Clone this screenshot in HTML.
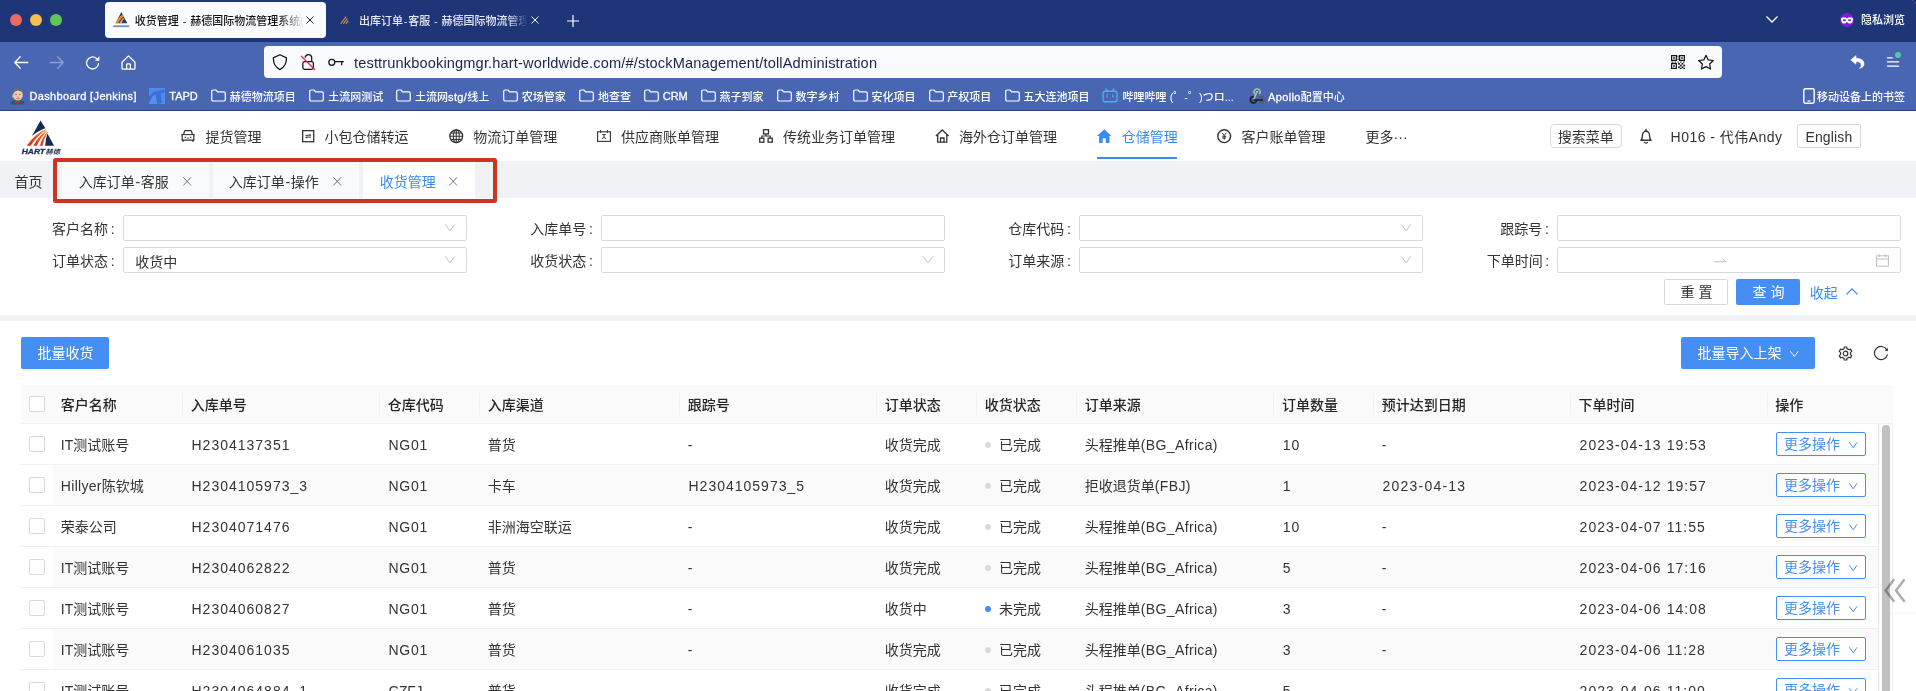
<!DOCTYPE html>
<html lang="zh-CN">
<head>
<meta charset="utf-8">
<title>收货管理 - 赫德国际物流管理系统</title>
<style>
*{box-sizing:border-box;margin:0;padding:0}
html,body{width:1916px;height:691px;overflow:hidden;background:#fff}
body{will-change:transform}
body{font-family:"Liberation Sans","Noto Sans CJK SC",sans-serif;font-size:14px;color:#333;position:relative}
.abs{position:absolute}
.t{position:absolute;white-space:nowrap;line-height:20px;height:20px}
svg{position:absolute;overflow:visible}
/* browser chrome */
#tabbar{left:0;top:0;width:1916px;height:42px;background:#1e3578}
#toolbar{left:0;top:42px;width:1916px;height:68px;background:#4966b2}
#chromeline{left:0;top:110px;width:1916px;height:1px;background:#2b3f86}
.bm{color:#fff;font-size:11px;font-weight:500;top:87px}
.lb{-webkit-text-stroke:.3px #fff;letter-spacing:.38px}
/* app */
.nav{font-size:14px;color:#333;top:127px}
.tag{top:162px;height:37px;background:#f9fafb}
.lbl{font-size:14px;color:#333;word-spacing:-1.3px}
.inp{position:absolute;height:26px;border:1px solid #d9d9d9;border-radius:2px;background:#fff}
.th{font-size:14px;font-weight:500;color:#262626;top:395px;margin-left:-.7px}
.sep{position:absolute;top:393px;width:1px;height:22px;background:#f0f0f0}
.row{position:absolute;left:21px;width:1857px;height:41px;border-bottom:1px solid #f0f0f0}
.row.g{background:linear-gradient(90deg,#fff 0,#fff 32px,#fafafa 32px)}
.c{position:absolute;white-space:nowrap;line-height:20px;top:11px;margin-left:-.7px;font-size:14px;color:#333}
.n{letter-spacing:1px;margin-left:0}
.la{letter-spacing:.36px}
.cb{position:absolute;left:8px;top:12px;width:16px;height:16px;border:1px solid #d9d9d9;border-radius:2px;background:#fff}
.dot{position:absolute;left:964px;top:18px;width:6px;height:6px;border-radius:50%;background:#d9d9d9}
.more{position:absolute;left:1755px;top:8px;width:90px;height:24px;border:1px solid #458ef4;border-radius:2px;background:#fff;color:#458ef4;font-size:14px;line-height:23px;padding-left:7px;box-shadow:0 2px 0 rgba(0,0,0,.02)}
</style>
</head>
<body>
<!-- ============ BROWSER CHROME ============ -->
<div class="abs" id="tabbar"></div>
<div class="abs" id="toolbar"></div>
<div class="abs" id="chromeline"></div>
<div class="abs" style="left:1912px;top:0;width:4px;height:4px;background:radial-gradient(circle at 0 100%,rgba(0,0,0,0) 3.300px,#4c5f9c 3.800px,#1a0f20 4.500px)"></div>
<!-- traffic lights -->
<div class="abs" style="left:10px;top:14px;width:12px;height:12px;border-radius:50%;background:#ec6a5e"></div>
<div class="abs" style="left:30px;top:14px;width:12px;height:12px;border-radius:50%;background:#f4bf4f"></div>
<div class="abs" style="left:50px;top:14px;width:12px;height:12px;border-radius:50%;background:#61c554"></div>
<!-- active tab -->
<div class="abs" style="left:105px;top:2px;width:221px;height:36px;border-radius:4px;background:#fafbfe"></div>
<svg style="left:113px;top:11px" width="17" height="17" viewBox="0 0 17 17"><path d="M8.300 1 L14.300 12.300 H2.600 Z" fill="#1f3a7a"/><path d="M2.400 12.300 L5.500 12.300 C6.500 9 8.500 6.800 10.800 5.700 L9.600 3.500 C6.500 5.500 3.800 8.500 2.400 12.300 Z" fill="#ee8a2e"/><path d="M6.600 12.300 L8.600 12.300 C9 10.300 10.200 8.500 11.900 7.600 L11.300 6.500 C8.900 7.800 7.300 9.800 6.600 12.300 Z" fill="#f3a64a"/><rect x="0.300" y="14.400" width="16" height="1.700" fill="#2b4a8f" opacity=".65"/></svg>
<div class="t" style="left:134.800px;top:11px;font-size:11px;color:#15141a;width:170px;overflow:hidden;word-spacing:.8px;font-weight:500">收货管理 - 赫德国际物流管理系统(</div>
<div class="abs" style="left:279px;top:8px;width:26px;height:24px;background:linear-gradient(90deg,rgba(250,251,254,0),#fafbfe)"></div>
<svg style="left:306px;top:16px" width="8" height="8" viewBox="0 0 8 8"><path d="M0.5 0.5 L7.5 7.5 M7.5 0.5 L0.5 7.5" stroke="#15141a" stroke-width="0.95" fill="none"/></svg>
<!-- inactive tab -->
<svg style="left:339px;top:15.300px" width="10.500" height="10.500" viewBox="0 0 12 12"><path d="M7 -1 L12.500 10 H1.500 Z" fill="#2a3f80"/><path d="M2 10 L8 2 M5 10 L9.5 4 M8 10 L10.5 6.5" stroke="#d98a3a" stroke-width="1.3" fill="none"/></svg>
<div class="t" style="left:359px;top:11px;font-size:11px;color:#e8eaf5;width:168px;overflow:hidden;word-spacing:.8px;font-weight:500">出库订单<span style="margin:0 .75px">-</span>客服 - 赫德国际物流管理系统</div>
<div class="abs" style="left:507px;top:8px;width:20px;height:24px;background:linear-gradient(90deg,rgba(30,53,120,0),#1e3578)"></div>
<svg style="left:531px;top:16px" width="8" height="8" viewBox="0 0 8 8"><path d="M0.5 0.5 L7.5 7.5 M7.5 0.5 L0.5 7.5" stroke="#fff" stroke-width="0.95" fill="none"/></svg>
<svg style="left:567px;top:14.500px" width="12" height="12" viewBox="0 0 12 12"><path d="M6 0 V12 M0 6 H12" stroke="#fff" stroke-width="1.2" fill="none"/></svg>
<!-- right of tab bar -->
<svg style="left:1766px;top:16px" width="12" height="7" viewBox="0 0 12 7"><path d="M0.5 0.5 L6 6 L11.5 0.5" stroke="#fff" stroke-width="1.3" fill="none"/></svg>
<div class="abs" style="left:1839.500px;top:12.500px;width:14.800px;height:14.800px;border-radius:50%;background:#7a1fd8"></div>
<svg style="left:1841px;top:16.800px" width="12" height="6.600" viewBox="0 0 10 5.500"><path d="M0 1.200 C1.500 0 3.500 0 5 1.200 C6.500 0 8.500 0 10 1.200 C10 4 9 5.500 7.500 5.500 C6.300 5.500 5.600 4.600 5 4.200 C4.400 4.600 3.700 5.500 2.500 5.500 C1 5.500 0 4 0 1.200 Z" fill="#fff"/><ellipse cx="2.800" cy="2.700" rx="1.300" ry="0.850" fill="#7a1fd8"/><ellipse cx="7.200" cy="2.700" rx="1.300" ry="0.850" fill="#7a1fd8"/></svg>
<div class="t" style="left:1861px;top:10px;font-size:11px;color:#fff;font-weight:500">隐私浏览</div>
<!-- nav buttons -->
<svg style="left:14px;top:56px" width="14" height="13" viewBox="0 0 14 13"><path d="M6.2 0.8 L0.8 6.5 L6.2 12.2 M0.8 6.5 H13.8" stroke="#fff" stroke-width="1.3" fill="none" stroke-linecap="round" stroke-linejoin="round"/></svg>
<svg style="left:50px;top:56px" width="14" height="13" viewBox="0 0 14 13"><path d="M7.8 0.8 L13.2 6.5 L7.8 12.2 M13.2 6.5 H0.2" stroke="#8fa0d2" stroke-width="1.3" fill="none" stroke-linecap="round" stroke-linejoin="round"/></svg>
<svg style="left:85px;top:55px" width="16" height="16" viewBox="0 0 16 16"><path d="M13.6 8.3 A6 6 0 1 1 11.5 3.4" stroke="#fff" stroke-width="1.3" fill="none" stroke-linecap="round"/><path d="M14.4 1.2 V5.8 H9.8 Z" fill="#fff"/></svg>
<svg style="left:121px;top:55px" width="15" height="15" viewBox="0 0 15 15"><path d="M1 7.2 L7.5 0.9 L14 7.2 V13.2 A0.9 0.9 0 0 1 13.1 14.1 H1.9 A0.9 0.9 0 0 1 1 13.2 Z" stroke="#fff" stroke-width="1.3" fill="none" stroke-linejoin="round"/><path d="M5.6 14 V9.6 A0.8 0.8 0 0 1 6.4 8.8 H8.6 A0.8 0.8 0 0 1 9.4 9.6 V14" stroke="#fff" stroke-width="1.3" fill="none"/></svg>
<!-- url bar -->
<div class="abs" style="left:264px;top:46px;width:1458px;height:32px;border-radius:4px;background:#f9fafd"></div>
<svg style="left:272px;top:54px" width="16" height="17" viewBox="0 0 16 17"><path d="M7.900 0.700 L14.500 3.900 C14.500 9.500 12 13.400 7.900 15.600 C3.800 13.400 1.300 9.500 1.300 3.900 Z" stroke="#15141a" stroke-width="1.250" fill="none" stroke-linejoin="round"/></svg>
<svg style="left:301px;top:54px" width="15" height="17" viewBox="0 0 15 17"><path d="M4.100 3.600 A3.350 3.500 0 0 1 10.700 3.400 V7.600" stroke="#15141a" stroke-width="1.250" fill="none"/><rect x="1.800" y="7.700" width="10.600" height="7.600" rx="1.700" stroke="#15141a" stroke-width="1.250" fill="none"/><path d="M0.100 2 L13.900 15.700" stroke="#e22850" stroke-width="1.250"/></svg>
<svg style="left:328px;top:57.700px" width="18" height="10" viewBox="0 0 18 10"><circle cx="3.800" cy="4.300" r="3" stroke="#15141a" stroke-width="1.250" fill="none"/><path d="M6.800 3.600 H15.800 M13.700 3.600 V7.200" stroke="#15141a" stroke-width="1.250" fill="none"/></svg>
<div class="t" id="url" style="left:354px;top:53px;font-size:14.6px;color:#1c2448;letter-spacing:0.14px">testtrunkbookingmgr.hart-worldwide.com/#/stockManagement/tollAdministration</div>
<!-- qr + star -->
<svg style="left:1671px;top:55px" width="14" height="14" viewBox="0 0 14 14" fill="#15141a"><path fill-rule="evenodd" d="M0 0h6v6H0z M1.200 1.200v3.600h3.600v-3.600z M8 0h6v6H8z M9.200 1.200v3.600h3.600v-3.600z M0 8h6v6H0z M1.200 9.200v3.600h3.600v-3.600z"/><rect x="2.200" y="2.200" width="1.600" height="1.600"/><rect x="10.200" y="2.200" width="1.600" height="1.600"/><rect x="2.200" y="10.200" width="1.600" height="1.600"/><rect x="6.600" y="0.500" width="1" height="2"/><rect x="6.600" y="3.500" width="1" height="1.500"/><rect x="6.600" y="6.500" width="1.200" height="1.200"/><rect x="0.500" y="6.600" width="2" height="1"/><rect x="3.600" y="6.600" width="1.600" height="1"/><rect x="9" y="6.600" width="1.400" height="1"/><rect x="12" y="6.600" width="1.600" height="1"/><rect x="7.200" y="8" width="1.700" height="1.700"/><rect x="10.600" y="8" width="1.700" height="1.700"/><rect x="8.900" y="9.700" width="1.700" height="1.700"/><rect x="12.300" y="9.700" width="1.700" height="1.700"/><rect x="7.200" y="11.400" width="1.700" height="1.700"/><rect x="10.600" y="11.400" width="1.700" height="1.700"/><rect x="12.300" y="12.800" width="1.700" height="1.200"/><rect x="8.900" y="12.800" width="1.700" height="1.200"/></svg>
<svg style="left:1697px;top:53.500px" width="18" height="17" viewBox="0 0 18 17"><path d="M9 1.300 L11.200 5.900 L16.300 6.500 L12.600 10 L13.500 15 L9 12.600 L4.500 15 L5.400 10 L1.700 6.500 L6.800 5.900 Z" stroke="#15141a" stroke-width="1.250" fill="none" stroke-linejoin="round"/></svg>
<!-- right toolbar icons -->
<svg style="left:1850px;top:55px" width="15" height="14" viewBox="0 0 15 14"><path d="M6 0.600 L0.800 4.900 L6 9.200 V6.600 C9 6.600 11.200 7.600 11.200 10.400 C11.200 11.600 10.600 12.600 9.400 13.400 C12.600 12.800 14.200 10.800 14 8.400 C13.700 5 10.500 3.300 6 3.200 Z" fill="#fff" stroke="#fff" stroke-width="0.600" stroke-linejoin="round"/></svg>
<svg style="left:1887px;top:56.700px" width="12" height="10" viewBox="0 0 12 10"><path d="M0.400 0.800 H5.400 M0.400 4.800 H11.600 M0.400 9 H11.600" stroke="#fff" stroke-width="1.250" fill="none" stroke-linecap="round"/></svg>
<div class="abs" style="left:1895px;top:52px;width:6px;height:6px;border-radius:50%;background:#54c9a2"></div>

<!-- bookmarks -->
<svg style="left:9.500px;top:87.500px" width="15" height="17" viewBox="0 0 15 17"><path d="M0.500 16.500 C0.500 13 3 12 7.500 12 C12 12 14.500 13 14.500 16.500 Z" fill="#3b5368"/><ellipse cx="7.800" cy="6.800" rx="5" ry="5.800" fill="#e9cfb0"/><path d="M2.600 6.500 C1.800 2.500 5 0.300 8.500 0.600 C11.500 0.800 13.300 3 13 5.200 C11.500 2.800 8.500 2.300 6.300 3 C4.300 3.600 3.200 5 3.200 7.500 Z" fill="#6d6b69"/><path d="M2.600 6.500 C1.500 7 1.800 9.500 3.200 9.600 Z" fill="#d9b995"/><path d="M5.200 13 L7.500 14 L9.800 13 L9.800 15.600 L7.500 14.600 L5.200 15.600 Z" fill="#d33833"/><path d="M5.800 10 C7 11.200 9 11.200 10.200 10" stroke="#8a6a50" stroke-width="0.700" fill="none"/><circle cx="6" cy="6.600" r="0.550" fill="#333"/><circle cx="9.800" cy="6.600" r="0.550" fill="#333"/><path d="M7.300 8.800 C7.800 9.200 8.500 9.200 9 8.800" stroke="#b5432f" stroke-width="0.600" fill="none"/></svg>
<div class="t bm" style="left:29.4px;top:86px"><span class="lb">Dashboard [Jenkins]</span></div>
<svg style="left:148.600px;top:88px" width="16" height="16" viewBox="0 0 16 16"><rect width="16" height="16" fill="#4d8df0"/><path d="M0 16 L0 8 L4.500 4 L15.500 1.200 L16 4.500 L11.800 5.600 L13 15 L8 16 L6.800 7 L3.600 8 Z" fill="#3f6fd0"/><path d="M0 16 L3.600 8 L6.800 7 L8 16 Z" fill="#5b9af5" opacity=".35"/></svg>
<div class="t bm" style="left:169.3px;top:86px"><span class="lb" style="letter-spacing:0">TAPD</span></div>
<svg style="left:211px;top:89px" width="15" height="13" viewBox="0 0 15 13"><path d="M0.7 2.6 A1.6 1.6 0 0 1 2.3 1 H5 L6.6 2.8 H12.7 A1.6 1.6 0 0 1 14.3 4.4 V10.4 A1.6 1.6 0 0 1 12.7 12 H2.3 A1.6 1.6 0 0 1 0.7 10.4 Z" stroke="#fff" stroke-width="1.2" fill="none" stroke-linejoin="round"/></svg>
<div class="t bm" style="left:229.8px">赫德物流项目</div>
<svg style="left:309px;top:89px" width="15" height="13" viewBox="0 0 15 13"><path d="M0.7 2.6 A1.6 1.6 0 0 1 2.3 1 H5 L6.6 2.8 H12.7 A1.6 1.6 0 0 1 14.3 4.4 V10.4 A1.6 1.6 0 0 1 12.7 12 H2.3 A1.6 1.6 0 0 1 0.7 10.4 Z" stroke="#fff" stroke-width="1.2" fill="none" stroke-linejoin="round"/></svg>
<div class="t bm" style="left:328.3px">土流网测试</div>
<svg style="left:396px;top:89px" width="15" height="13" viewBox="0 0 15 13"><path d="M0.7 2.6 A1.6 1.6 0 0 1 2.3 1 H5 L6.6 2.8 H12.7 A1.6 1.6 0 0 1 14.3 4.4 V10.4 A1.6 1.6 0 0 1 12.7 12 H2.3 A1.6 1.6 0 0 1 0.7 10.4 Z" stroke="#fff" stroke-width="1.2" fill="none" stroke-linejoin="round"/></svg>
<div class="t bm" style="left:415px">土流网<span class="lb">stg/</span>线上</div>
<svg style="left:503px;top:89px" width="15" height="13" viewBox="0 0 15 13"><path d="M0.7 2.6 A1.6 1.6 0 0 1 2.3 1 H5 L6.6 2.8 H12.7 A1.6 1.6 0 0 1 14.3 4.4 V10.4 A1.6 1.6 0 0 1 12.7 12 H2.3 A1.6 1.6 0 0 1 0.7 10.4 Z" stroke="#fff" stroke-width="1.2" fill="none" stroke-linejoin="round"/></svg>
<div class="t bm" style="left:521.7px">农场管家</div>
<svg style="left:578.8px;top:89px" width="15" height="13" viewBox="0 0 15 13"><path d="M0.7 2.6 A1.6 1.6 0 0 1 2.3 1 H5 L6.6 2.8 H12.7 A1.6 1.6 0 0 1 14.3 4.4 V10.4 A1.6 1.6 0 0 1 12.7 12 H2.3 A1.6 1.6 0 0 1 0.7 10.4 Z" stroke="#fff" stroke-width="1.2" fill="none" stroke-linejoin="round"/></svg>
<div class="t bm" style="left:597.9px">地查查</div>
<svg style="left:644px;top:89px" width="15" height="13" viewBox="0 0 15 13"><path d="M0.7 2.6 A1.6 1.6 0 0 1 2.3 1 H5 L6.6 2.8 H12.7 A1.6 1.6 0 0 1 14.3 4.4 V10.4 A1.6 1.6 0 0 1 12.7 12 H2.3 A1.6 1.6 0 0 1 0.7 10.4 Z" stroke="#fff" stroke-width="1.2" fill="none" stroke-linejoin="round"/></svg>
<div class="t bm" style="left:662.7px;top:86px"><span class="lb" style="letter-spacing:0">CRM</span></div>
<svg style="left:701px;top:89px" width="15" height="13" viewBox="0 0 15 13"><path d="M0.7 2.6 A1.6 1.6 0 0 1 2.3 1 H5 L6.6 2.8 H12.7 A1.6 1.6 0 0 1 14.3 4.4 V10.4 A1.6 1.6 0 0 1 12.7 12 H2.3 A1.6 1.6 0 0 1 0.7 10.4 Z" stroke="#fff" stroke-width="1.2" fill="none" stroke-linejoin="round"/></svg>
<div class="t bm" style="left:719.5px">燕子到家</div>
<svg style="left:777px;top:89px" width="15" height="13" viewBox="0 0 15 13"><path d="M0.7 2.6 A1.6 1.6 0 0 1 2.3 1 H5 L6.6 2.8 H12.7 A1.6 1.6 0 0 1 14.3 4.4 V10.4 A1.6 1.6 0 0 1 12.7 12 H2.3 A1.6 1.6 0 0 1 0.7 10.4 Z" stroke="#fff" stroke-width="1.2" fill="none" stroke-linejoin="round"/></svg>
<div class="t bm" style="left:795.6px">数字乡村</div>
<svg style="left:853px;top:89px" width="15" height="13" viewBox="0 0 15 13"><path d="M0.7 2.6 A1.6 1.6 0 0 1 2.3 1 H5 L6.6 2.8 H12.7 A1.6 1.6 0 0 1 14.3 4.4 V10.4 A1.6 1.6 0 0 1 12.7 12 H2.3 A1.6 1.6 0 0 1 0.7 10.4 Z" stroke="#fff" stroke-width="1.2" fill="none" stroke-linejoin="round"/></svg>
<div class="t bm" style="left:871.5px">安化项目</div>
<svg style="left:929px;top:89px" width="15" height="13" viewBox="0 0 15 13"><path d="M0.7 2.6 A1.6 1.6 0 0 1 2.3 1 H5 L6.6 2.8 H12.7 A1.6 1.6 0 0 1 14.3 4.4 V10.4 A1.6 1.6 0 0 1 12.7 12 H2.3 A1.6 1.6 0 0 1 0.7 10.4 Z" stroke="#fff" stroke-width="1.2" fill="none" stroke-linejoin="round"/></svg>
<div class="t bm" style="left:947.3px">产权项目</div>
<svg style="left:1004.7px;top:89px" width="15" height="13" viewBox="0 0 15 13"><path d="M0.7 2.6 A1.6 1.6 0 0 1 2.3 1 H5 L6.6 2.8 H12.7 A1.6 1.6 0 0 1 14.3 4.4 V10.4 A1.6 1.6 0 0 1 12.7 12 H2.3 A1.6 1.6 0 0 1 0.7 10.4 Z" stroke="#fff" stroke-width="1.2" fill="none" stroke-linejoin="round"/></svg>
<div class="t bm" style="left:1023.4px">五大连池项目</div>

<svg style="left:1102px;top:88px" width="16" height="15" viewBox="0 0 16 15"><path d="M4 0.8 L6 3.2 M12 0.8 L10 3.2" stroke="#3fb5ea" stroke-width="1.3" stroke-linecap="round"/><rect x="1" y="3.2" width="14" height="10.6" rx="2.2" stroke="#3fb5ea" stroke-width="1.4" fill="none"/><path d="M5.2 7 V9 M10.8 7 V9" stroke="#3fb5ea" stroke-width="1.4" stroke-linecap="round"/></svg>
<div class="t bm" style="left:1122.6px">哔哩哔哩 (゜-゜)つロ...</div>
<svg style="left:1248.5px;top:87.500px" width="17" height="17" viewBox="0 0 17 17"><path d="M6.200 6.200 A3 3 0 1 1 10.600 5.600" stroke="#a7c4a0" stroke-width="1.500" fill="none" stroke-linecap="round"/><path d="M8 3.800 L4.600 11.600" stroke="#a7c4a0" stroke-width="1.500" fill="none" stroke-linecap="round"/><path d="M4 8.600 A3.200 3.200 0 1 0 7.600 12.800" stroke="#1c1b22" stroke-width="1.600" fill="none" stroke-linecap="round"/><path d="M4.400 12 H12.600" stroke="#1c1b22" stroke-width="1.500" fill="none" stroke-linecap="round"/><path d="M10.400 9.600 A3 3 0 1 1 11 14.400" stroke="#5b5b66" stroke-width="1.500" fill="none" stroke-linecap="round"/><circle cx="12.600" cy="12" r="1.200" fill="#1c1b22"/><circle cx="8.200" cy="3.800" r="1" fill="#a7c4a0"/></svg>
<div class="t bm" style="left:1268px"><span class="lb">Apollo</span>配置中心</div>
<svg style="left:1803px;top:88px" width="12" height="16" viewBox="0 0 12 16"><rect x="0.8" y="0.8" width="10.4" height="14.4" rx="1.6" stroke="#fff" stroke-width="1.4" fill="none"/><path d="M4.5 13 H7.5" stroke="#fff" stroke-width="1.2"/></svg>
<div class="t bm" style="left:1817px">移动设备上的书签</div>


<!-- ============ APP HEADER ============ -->
<div class="abs" id="apphdr" style="left:0;top:111px;width:1916px;height:50px;background:#fff;box-shadow:0 1px 4px rgba(0,21,41,.08)"></div>
<!-- logo -->
<svg style="left:20px;top:119px" width="42" height="38" viewBox="0 0 42 38">
<defs><linearGradient id="lg1" x1="0" y1="1" x2="1" y2="0"><stop offset="0" stop-color="#d9261c"/><stop offset="0.550" stop-color="#ea5a24"/><stop offset="1" stop-color="#f7b04a"/></linearGradient></defs>
<path d="M20.500 1.600 L12 17 Q19 11.200 25.400 9.300 Z" fill="#1b2a52"/>
<path d="M6.800 26.800 Q15 15 25.700 10.100 L26.300 10.900 Q17.300 16.500 10.600 26.800 Z" fill="url(#lg1)"/>
<path d="M13.300 26.800 Q18.500 17 26.700 11.400 L27.200 12.200 Q20.800 18 16.800 26.800 Z" fill="url(#lg1)"/>
<path d="M20 26.800 Q22 18.500 27.500 12.800 L27.900 13.600 Q23.900 19.500 22.500 26.800 Z" fill="url(#lg1)"/>
<path d="M27.400 14.400 L34.100 26.800 H25.200 Q25.500 20 27.400 14.400 Z" fill="#1b2a52"/>
<text x="1.700" y="35.300" font-family="Liberation Sans, sans-serif" font-size="8" font-weight="700" font-style="italic" fill="#1b2a52" stroke="#1b2a52" stroke-width=".3" textLength="23.300" lengthAdjust="spacingAndGlyphs">HART</text>
<text x="25.600" y="35.100" font-family="Liberation Sans, Noto Sans CJK SC, sans-serif" font-size="6.400" font-weight="700" font-style="italic" fill="#1b2a52" textLength="14.200" lengthAdjust="spacingAndGlyphs">赫德</text>
</svg>
<!-- nav -->
<svg style="left:181px;top:130px" width="14" height="12" viewBox="0 0 14 12"><path d="M2.500 4.600 L3.500 1.300 Q3.700 0.650 4.400 0.650 H9.600 Q10.300 0.650 10.500 1.300 L11.500 4.600" stroke="#333" stroke-width="1.250" fill="none"/><path d="M0.300 4.600 H13.700" stroke="#333" stroke-width="1.100"/><path d="M1.200 4.600 V10 H12.800 V4.600" stroke="#333" stroke-width="1.250" fill="none"/><path d="M2.100 10 V11.800 M11.900 10 V11.800" stroke="#333" stroke-width="1.500"/><circle cx="4.300" cy="7.300" r="0.700" fill="#333"/><circle cx="9.700" cy="7.300" r="0.700" fill="#333"/><path d="M5.800 8.100 H8.200" stroke="#333" stroke-width="0.900"/></svg>
<div class="t nav" style="left:205.400px">提货管理</div>
<svg style="left:301.600px;top:129.800px" width="12.400" height="12.400" viewBox="0 0 12.400 12.400"><rect x="0.650" y="0.650" width="11.100" height="11.100" stroke="#333" stroke-width="1.300" fill="none"/><path d="M3.400 5.300 H8.800 L7.600 4 M9 7.100 H3.600 L4.800 8.400" stroke="#333" stroke-width="1" fill="none"/></svg>
<div class="t nav" style="left:324.600px">小包仓储转运</div>
<svg style="left:448.500px;top:128.700px" width="14.500" height="14.500" viewBox="0 0 14.500 14.500"><circle cx="7.250" cy="7.250" r="6.400" stroke="#333" stroke-width="1.300" fill="none"/><ellipse cx="7.250" cy="7.250" rx="3" ry="6.400" stroke="#333" stroke-width="1.050" fill="none"/><path d="M7.250 0.800 V13.700 M0.800 7.250 H13.700 M1.700 4 H12.800 M1.700 10.500 H12.800" stroke="#333" stroke-width="1.050" fill="none"/></svg>
<div class="t nav" style="left:473.300px">物流订单管理</div>
<svg style="left:597px;top:130px" width="14" height="12" viewBox="0 0 14 12"><rect x="0.600" y="1.800" width="12.800" height="9.600" stroke="#333" stroke-width="1.100" fill="none"/><path d="M3.600 0 V3 M10.400 0 V3 M5.200 4.600 H8.800 M7 4.600 V6 M5.200 9.200 L7 6.400 L8.800 9.200" stroke="#333" stroke-width="1" fill="none"/></svg>
<div class="t nav" style="left:621px">供应商账单管理</div>
<svg style="left:759px;top:129px" width="14" height="14" viewBox="0 0 14 14"><rect x="4.500" y="0.700" width="5" height="4.200" stroke="#333" stroke-width="1.300" fill="none"/><rect x="0.700" y="9.200" width="4.200" height="4" stroke="#333" stroke-width="1.300" fill="none"/><rect x="9.100" y="9.200" width="4.200" height="4" stroke="#333" stroke-width="1.300" fill="none"/><path d="M7 4.900 V7 M2.800 9.200 V7 H11.200 V9.200" stroke="#333" stroke-width="1.200" fill="none"/></svg>
<div class="t nav" style="left:783px">传统业务订单管理</div>
<svg style="left:934.600px;top:129px" width="14.500" height="14" viewBox="0 0 14.500 14"><path d="M0.900 7 L7.250 1 L13.600 7 M2.700 5.600 V13.200 H11.800 V5.600 M5.500 13.200 V9 H9 V13.200" stroke="#333" stroke-width="1.300" fill="none" stroke-linejoin="miter"/></svg>
<div class="t nav" style="left:959px">海外仓订单管理</div>
<svg style="left:1096.500px;top:129px" width="14.500" height="14" viewBox="0 0 14.500 14"><path d="M7.250 0.200 L14.400 6.900 H12.400 V13.900 H8.800 V9.200 H5.700 V13.900 H2.100 V6.900 H0.100 Z" fill="#3b8af2"/></svg>
<div class="t nav" style="left:1121.800px;color:#3b8af2">仓储管理</div>
<div class="abs" style="left:1096.500px;top:157px;width:80px;height:2px;background:#3b8af2"></div>
<svg style="left:1216.900px;top:128.900px" width="14.400" height="14.400" viewBox="0 0 14.400 14.400"><circle cx="7.200" cy="7.200" r="6.400" stroke="#333" stroke-width="1.400" fill="none"/><path d="M5.200 3.900 L7.200 6.600 L9.200 3.900 M7.200 6.600 V10.700 M5.300 7.300 H9.100 M5.300 9 H9.100" stroke="#333" stroke-width="1" fill="none"/></svg>
<div class="t nav" style="left:1241.500px">客户账单管理</div>
<div class="t nav" style="left:1365.600px">更多···</div>
<div class="abs" style="left:1550px;top:124px;width:72px;height:24px;border:1px solid #d9d9d9;border-radius:4px;background:#fff"></div>
<div class="t nav" style="left:1557.800px">搜索菜单</div>
<svg style="left:1640px;top:129px" width="12" height="15" viewBox="0 0 12 15"><path d="M0.900 11.200 C2.200 10.200 2.500 8.600 2.500 6.200 A3.500 3.900 0 0 1 9.500 6.200 C9.500 8.600 9.800 10.200 11.100 11.200 Z" stroke="#333" stroke-width="1.400" fill="none" stroke-linejoin="round"/><path d="M4.300 13 A1.800 1.600 0 0 0 7.700 13" stroke="#333" stroke-width="1.300" fill="none"/><path d="M6 0.500 V2" stroke="#333" stroke-width="1.400" stroke-linecap="round"/></svg>
<div class="t nav" style="left:1670.600px;letter-spacing:.46px">H016 - 代伟Andy</div>
<div class="abs" style="left:1797px;top:124px;width:64px;height:24px;border:1px solid #d9d9d9;border-radius:2px;background:#fff"></div>
<div class="t nav" style="left:1805.400px;letter-spacing:.15px">English</div>


<!-- ============ TAGS ============ -->
<div class="abs" id="tagsbar" style="left:0;top:161px;width:1916px;height:38px;background:#f0f2f5"></div>
<div class="t" style="left:14.500px;top:172px;font-size:14px;color:#333">首页</div>
<div class="abs tag" style="left:62px;width:147px"></div>
<div class="abs tag" style="left:213px;width:146px"></div>
<div class="abs tag" style="left:363px;width:112px;background:#fff"></div>
<div class="t" style="left:78.800px;top:172px;color:#333">入库订单<span style="margin:0 .6px">-</span>客服</div>
<div class="t" style="left:228.800px;top:172px;color:#333">入库订单<span style="margin:0 .6px">-</span>操作</div>
<div class="t" style="left:379.800px;top:172px;color:#3b8af2">收货管理</div>
<svg style="left:182.8px;top:176.800px" width="8.400" height="8.800" viewBox="0 0 8.400 8.800"><path d="M0.300 0.300 L8.100 8.500 M8.100 0.300 L0.300 8.500" stroke="#6a6a6a" stroke-width="0.950" fill="none"/></svg>
<svg style="left:332.8px;top:176.800px" width="8.400" height="8.800" viewBox="0 0 8.400 8.800"><path d="M0.300 0.300 L8.100 8.500 M8.100 0.300 L0.300 8.500" stroke="#6a6a6a" stroke-width="0.950" fill="none"/></svg>
<svg style="left:448.8px;top:176.800px" width="8.400" height="8.800" viewBox="0 0 8.400 8.800"><path d="M0.300 0.300 L8.100 8.500 M8.100 0.300 L0.300 8.500" stroke="#6a6a6a" stroke-width="0.950" fill="none"/></svg>


<!-- ============ FILTER ============ -->
<div class="abs" id="filter" style="left:0;top:198px;width:1916px;height:117px;background:#fff"></div>
<div class="t lbl" style="left:52.1px;top:219px">客户名称 :</div>
<div class="inp" style="left:123px;top:215px;width:344px"></div>
<div class="t lbl" style="left:52.1px;top:251px">订单状态 :</div>
<div class="inp" style="left:123px;top:247px;width:344px"></div>
<div class="t" style="left:135.300px;top:251.500px;color:#333">收货中</div>
<div class="t lbl" style="left:530.3px;top:219px">入库单号 :</div>
<div class="inp" style="left:601px;top:215px;width:344px"></div>
<div class="t lbl" style="left:530.3px;top:251px">收货状态 :</div>
<div class="inp" style="left:601px;top:247px;width:344px"></div>
<div class="t lbl" style="left:1008.3px;top:219px">仓库代码 :</div>
<div class="inp" style="left:1079px;top:215px;width:344px"></div>
<div class="t lbl" style="left:1008.3px;top:251px">订单来源 :</div>
<div class="inp" style="left:1079px;top:247px;width:344px"></div>
<div class="t lbl" style="left:1500.3px;top:219px">跟踪号 :</div>
<div class="inp" style="left:1557px;top:215px;width:344px"></div>
<div class="t lbl" style="left:1486.7px;top:251px">下单时间 :</div>
<div class="inp" style="left:1557px;top:247px;width:344px"></div>
<svg style="left:445.0px;top:224.200px" width="10" height="7.400" viewBox="0 0 10 7.400"><path d="M0.200 0.400 L5 6.800 L9.800 0.400" stroke="#bfbfbf" stroke-width="1" fill="none"/></svg><svg style="left:445.0px;top:256.200px" width="10" height="7.400" viewBox="0 0 10 7.400"><path d="M0.200 0.400 L5 6.800 L9.800 0.400" stroke="#bfbfbf" stroke-width="1" fill="none"/></svg><svg style="left:923.0px;top:256.200px" width="10" height="7.400" viewBox="0 0 10 7.400"><path d="M0.200 0.400 L5 6.800 L9.800 0.400" stroke="#bfbfbf" stroke-width="1" fill="none"/></svg><svg style="left:1401.0px;top:224.200px" width="10" height="7.400" viewBox="0 0 10 7.400"><path d="M0.200 0.400 L5 6.800 L9.800 0.400" stroke="#bfbfbf" stroke-width="1" fill="none"/></svg><svg style="left:1401.0px;top:256.200px" width="10" height="7.400" viewBox="0 0 10 7.400"><path d="M0.200 0.400 L5 6.800 L9.800 0.400" stroke="#bfbfbf" stroke-width="1" fill="none"/></svg>
<svg style="left:1713.500px;top:257px" width="13" height="6" viewBox="0 0 13 6"><path d="M0.500 4.800 H12 L8.600 1.800" stroke="#bfbfbf" stroke-width="1" fill="none"/></svg>
<svg style="left:1875.500px;top:254px" width="13" height="13" viewBox="0 0 13 13"><rect x="0.600" y="1.800" width="11.800" height="10.400" stroke="#bfbfbf" stroke-width="1" fill="none"/><path d="M0.600 5 H12.400 M3.600 0.300 V3 M9.400 0.300 V3" stroke="#bfbfbf" stroke-width="1" fill="none"/></svg>
<div class="abs" style="left:1664px;top:279px;width:64px;height:26px;border:1px solid #d9d9d9;border-radius:2px;background:#fff"></div>
<div class="t" style="left:1680.500px;top:282px;color:#333;letter-spacing:4px">重置</div>
<div class="abs" style="left:1736px;top:279px;width:64px;height:26px;border-radius:2px;background:#458ef4"></div>
<div class="t" style="left:1752.500px;top:282px;color:#fff;letter-spacing:4px">查询</div>
<div class="t" style="left:1809.700px;top:282.500px;color:#3b8af2">收起</div>
<svg style="left:1845.500px;top:287.500px" width="12" height="7" viewBox="0 0 12 7"><path d="M0.500 6.500 L6 0.800 L11.500 6.500" stroke="#3b8af2" stroke-width="1.100" fill="none"/></svg>

<div class="abs" style="left:0;top:315px;width:1916px;height:6px;background:#f0f2f5"></div>

<div class="abs" id="redbox" style="left:53px;top:158px;width:444px;height:45px;border:4px solid #cd3522;border-radius:2.500px"></div>
<!-- ============ TABLE ============ -->
<div class="abs" id="panel" style="left:0;top:321px;width:1916px;height:370px;background:#fff"></div>
<div class="abs" style="left:21px;top:337px;width:88px;height:32px;border-radius:2px;background:#458ef4;box-shadow:0 2px 0 rgba(0,0,0,.045)"></div>
<div class="t" style="left:37.400px;top:343px;color:#fff">批量收货</div>
<div class="abs" style="left:1681px;top:337px;width:134px;height:32px;border-radius:2px;background:#458ef4;box-shadow:0 2px 0 rgba(0,0,0,.045)"></div>
<div class="t" style="left:1697.500px;top:343px;color:#fff">批量导入上架</div>
<svg style="left:1789.700px;top:350.600px" width="8.600" height="6" viewBox="0 0 8.600 6"><path d="M0.300 0.300 L4.300 5.500 L8.300 0.300" stroke="#fff" stroke-width="1" fill="none"/></svg>
<svg style="left:1838.200px;top:346.200px" width="15" height="15" viewBox="0 0 15 15"><path d="M6.01 2.62 L6.24 1.02 L8.76 1.02 L8.99 2.62 L10.98 3.77 L12.48 3.17 L13.74 5.35 L12.47 6.35 L12.47 8.65 L13.74 9.65 L12.48 11.83 L10.98 11.23 L8.99 12.38 L8.76 13.98 L6.24 13.98 L6.01 12.38 L4.02 11.23 L2.52 11.83 L1.26 9.65 L2.53 8.65 L2.53 6.35 L1.26 5.35 L2.52 3.17 L4.02 3.77 Z" stroke="#333" stroke-width="1.200" fill="none" stroke-linejoin="round"/><circle cx="7.500" cy="7.500" r="2.300" stroke="#333" stroke-width="1.200" fill="none"/></svg>
<svg style="left:1873px;top:345.200px" width="16" height="16" viewBox="0 0 16 16"><path d="M13.830 4.900 A6.600 6.600 0 1 0 14.460 9.370" stroke="#333" stroke-width="1.200" fill="none"/><path d="M14.700 2.700 L14.900 6.300 L11.700 5.500 Z" fill="#333"/></svg>
<!-- table header -->
<div class="abs" style="left:21px;top:385px;width:1872px;height:39px;background:#fafafa;border-bottom:1px solid #f0f0f0"></div>
<div class="cb" style="left:29px;top:396px"></div>
<div class="t th" style="left:61.5px">客户名称</div>
<div class="t th" style="left:191.5px">入库单号</div>
<div class="t th" style="left:388.5px">仓库代码</div>
<div class="t th" style="left:488.5px">入库渠道</div>
<div class="t th" style="left:688.5px">跟踪号</div>
<div class="t th" style="left:885.5px">订单状态</div>
<div class="t th" style="left:985.5px">收货状态</div>
<div class="t th" style="left:1085.5px">订单来源</div>
<div class="t th" style="left:1282.7px">订单数量</div>
<div class="t th" style="left:1382.5px">预计达到日期</div>
<div class="t th" style="left:1579.3px">下单时间</div>
<div class="t th" style="left:1776px">操作</div>
<div class="sep" style="left:182px"></div>
<div class="sep" style="left:379px"></div>
<div class="sep" style="left:479px"></div>
<div class="sep" style="left:679px"></div>
<div class="sep" style="left:876px"></div>
<div class="sep" style="left:976px"></div>
<div class="sep" style="left:1076px"></div>
<div class="sep" style="left:1273px"></div>
<div class="sep" style="left:1373px"></div>
<div class="sep" style="left:1570px"></div>
<div class="sep" style="left:1767px"></div>
<div class="row" style="top:424px">
<div class="cb"></div><div class="c" style="left:40.5px">IT测试账号</div><div class="c n" style="left:170.5px">H2304137351</div><div class="c n" style="left:367.5px;letter-spacing:.7px">NG01</div><div class="c" style="left:467.5px">普货</div><div class="c" style="left:667.5px">-</div><div class="c" style="left:864.5px">收货完成</div><div class="c" style="left:978.7px">已完成</div><div class="c" style="left:1064.5px">头程推单<span class="la">(BG_Africa)</span></div><div class="c n" style="left:1261.7px">10</div><div class="c" style="left:1361.5px">-</div><div class="c n" style="left:1558.6px;letter-spacing:1.05px">2023-04-13 19:53</div><div class="dot" style="background:#d9d9d9"></div><div class="more">更多操作<svg style="left:72px;top:8.800px" width="8.400" height="6.200" viewBox="0 0 8.400 6.200"><path d="M0.300 0.300 L4.200 5.800 L8.100 0.300" stroke="#458ef4" stroke-width="1" fill="none"/></svg></div></div>
<div class="row g" style="top:465px">
<div class="cb"></div><div class="c" style="left:40.5px"><span style="letter-spacing:.3px">Hillyer</span>陈钦城</div><div class="c n" style="left:170.5px">H2304105973_3</div><div class="c n" style="left:367.5px;letter-spacing:.7px">NG01</div><div class="c" style="left:467.5px">卡车</div><div class="c n" style="left:667.5px">H2304105973_5</div><div class="c" style="left:864.5px">收货完成</div><div class="c" style="left:978.7px">已完成</div><div class="c" style="left:1064.5px">拒收退货单<span class="la">(FBJ)</span></div><div class="c n" style="left:1261.7px">1</div><div class="c n" style="left:1361.5px;letter-spacing:1.22px">2023-04-13</div><div class="c n" style="left:1558.6px;letter-spacing:1.05px">2023-04-12 19:57</div><div class="dot" style="background:#d9d9d9"></div><div class="more">更多操作<svg style="left:72px;top:8.800px" width="8.400" height="6.200" viewBox="0 0 8.400 6.200"><path d="M0.300 0.300 L4.200 5.800 L8.100 0.300" stroke="#458ef4" stroke-width="1" fill="none"/></svg></div></div>
<div class="row" style="top:506px">
<div class="cb"></div><div class="c" style="left:40.5px">荣泰公司</div><div class="c n" style="left:170.5px">H2304071476</div><div class="c n" style="left:367.5px;letter-spacing:.7px">NG01</div><div class="c" style="left:467.5px">非洲海空联运</div><div class="c" style="left:667.5px">-</div><div class="c" style="left:864.5px">收货完成</div><div class="c" style="left:978.7px">已完成</div><div class="c" style="left:1064.5px">头程推单<span class="la">(BG_Africa)</span></div><div class="c n" style="left:1261.7px">10</div><div class="c" style="left:1361.5px">-</div><div class="c n" style="left:1558.6px;letter-spacing:1.05px">2023-04-07 11:55</div><div class="dot" style="background:#d9d9d9"></div><div class="more">更多操作<svg style="left:72px;top:8.800px" width="8.400" height="6.200" viewBox="0 0 8.400 6.200"><path d="M0.300 0.300 L4.200 5.800 L8.100 0.300" stroke="#458ef4" stroke-width="1" fill="none"/></svg></div></div>
<div class="row g" style="top:547px">
<div class="cb"></div><div class="c" style="left:40.5px">IT测试账号</div><div class="c n" style="left:170.5px">H2304062822</div><div class="c n" style="left:367.5px;letter-spacing:.7px">NG01</div><div class="c" style="left:467.5px">普货</div><div class="c" style="left:667.5px">-</div><div class="c" style="left:864.5px">收货完成</div><div class="c" style="left:978.7px">已完成</div><div class="c" style="left:1064.5px">头程推单<span class="la">(BG_Africa)</span></div><div class="c n" style="left:1261.7px">5</div><div class="c" style="left:1361.5px">-</div><div class="c n" style="left:1558.6px;letter-spacing:1.05px">2023-04-06 17:16</div><div class="dot" style="background:#d9d9d9"></div><div class="more">更多操作<svg style="left:72px;top:8.800px" width="8.400" height="6.200" viewBox="0 0 8.400 6.200"><path d="M0.300 0.300 L4.200 5.800 L8.100 0.300" stroke="#458ef4" stroke-width="1" fill="none"/></svg></div></div>
<div class="row" style="top:588px">
<div class="cb"></div><div class="c" style="left:40.5px">IT测试账号</div><div class="c n" style="left:170.5px">H2304060827</div><div class="c n" style="left:367.5px;letter-spacing:.7px">NG01</div><div class="c" style="left:467.5px">普货</div><div class="c" style="left:667.5px">-</div><div class="c" style="left:864.5px">收货中</div><div class="c" style="left:978.7px">未完成</div><div class="c" style="left:1064.5px">头程推单<span class="la">(BG_Africa)</span></div><div class="c n" style="left:1261.7px">3</div><div class="c" style="left:1361.5px">-</div><div class="c n" style="left:1558.6px;letter-spacing:1.05px">2023-04-06 14:08</div><div class="dot" style="background:#458ef4"></div><div class="more">更多操作<svg style="left:72px;top:8.800px" width="8.400" height="6.200" viewBox="0 0 8.400 6.200"><path d="M0.300 0.300 L4.200 5.800 L8.100 0.300" stroke="#458ef4" stroke-width="1" fill="none"/></svg></div></div>
<div class="row g" style="top:629px">
<div class="cb"></div><div class="c" style="left:40.5px">IT测试账号</div><div class="c n" style="left:170.5px">H2304061035</div><div class="c n" style="left:367.5px;letter-spacing:.7px">NG01</div><div class="c" style="left:467.5px">普货</div><div class="c" style="left:667.5px">-</div><div class="c" style="left:864.5px">收货完成</div><div class="c" style="left:978.7px">已完成</div><div class="c" style="left:1064.5px">头程推单<span class="la">(BG_Africa)</span></div><div class="c n" style="left:1261.7px">3</div><div class="c" style="left:1361.5px">-</div><div class="c n" style="left:1558.6px;letter-spacing:1.05px">2023-04-06 11:28</div><div class="dot" style="background:#d9d9d9"></div><div class="more">更多操作<svg style="left:72px;top:8.800px" width="8.400" height="6.200" viewBox="0 0 8.400 6.200"><path d="M0.300 0.300 L4.200 5.800 L8.100 0.300" stroke="#458ef4" stroke-width="1" fill="none"/></svg></div></div>
<div class="row" style="top:670px">
<div class="cb"></div><div class="c" style="left:40.5px">IT测试账号</div><div class="c n" style="left:170.5px">H2304064884_1</div><div class="c n" style="left:367.5px;letter-spacing:-.3px">GZFJ</div><div class="c" style="left:467.5px">普货</div><div class="c" style="left:667.5px">-</div><div class="c" style="left:864.5px">收货完成</div><div class="c" style="left:978.7px">已完成</div><div class="c" style="left:1064.5px">头程推单<span class="la">(BG_Africa)</span></div><div class="c n" style="left:1261.7px">5</div><div class="c" style="left:1361.5px">-</div><div class="c n" style="left:1558.6px;letter-spacing:1.05px">2023-04-06 11:00</div><div class="dot" style="background:#d9d9d9"></div><div class="more">更多操作<svg style="left:72px;top:8.800px" width="8.400" height="6.200" viewBox="0 0 8.400 6.200"><path d="M0.300 0.300 L4.200 5.800 L8.100 0.300" stroke="#458ef4" stroke-width="1" fill="none"/></svg></div></div>

<!-- scrollbar -->
<div class="abs" style="left:1878px;top:424px;width:15px;height:267px;background:#fcfcfc;border-left:1px solid #ebebeb;border-right:1px solid #f0f0f0"></div><div class="abs" style="left:1879px;top:613px;width:37px;height:1px;background:#f6f6f6"></div>
<div class="abs" style="left:1882px;top:425px;width:8px;height:270px;border-radius:4px;background:#c1c1c1"></div>
<!-- collapse handle -->
<svg style="left:1884px;top:579px" width="22" height="23" viewBox="0 0 22 23"><path d="M10.200 0.300 L1.600 11.500 L10.200 22.700 M20.600 0.300 L12 11.500 L20.600 22.700" stroke="rgba(0,0,0,.33)" stroke-width="2.400" fill="none"/></svg>

</body>
</html>
